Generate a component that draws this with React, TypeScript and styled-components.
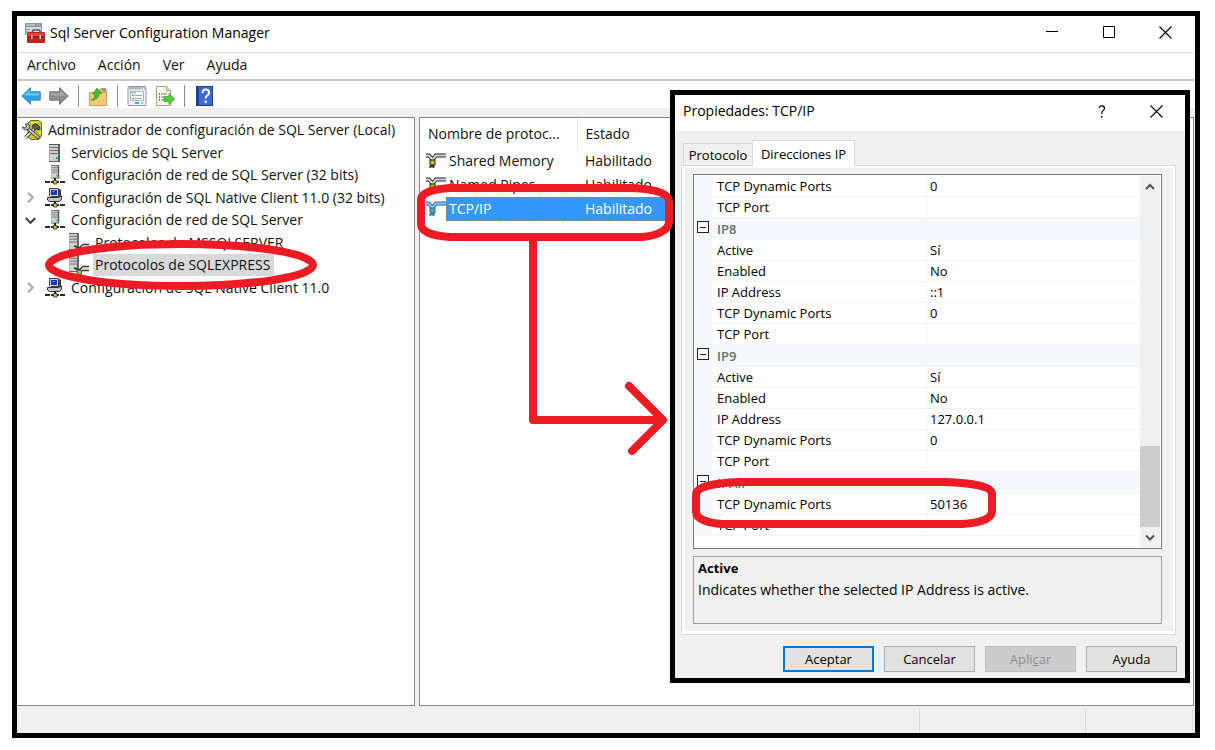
import React from "react";
import styled, { createGlobalStyle, css } from "styled-components";

const GlobalStyle = createGlobalStyle`
  *, *::before, *::after { box-sizing: border-box; }
  body {
    margin: 0;
    background: #fff;
    color: #111;
    font-family: "Open Sans", "Noto Sans", sans-serif;
    font-size: 14px;
    line-height: 20px;
  }
  button {
    font: inherit;
    color: inherit;
    padding: 0;
    border: 0;
    background: none;
  }
  svg { display: block; flex-shrink: 0; }
`;

const Page = styled.div`
  position: relative;
  min-height: 100vh;
  padding: 11px 15px 12px 12px;
  display: flex;
`;

const Window = styled.main`
  position: relative;
  flex: 1;
  min-width: 0;
  display: flex;
  flex-direction: column;
  border: 5px solid #000;
  background: #fff;
`;

const TitleBar = styled.header`
  display: flex;
  align-items: stretch;
  height: 37px;
  padding: 0 1px 0 8px;
  border-bottom: 1px solid #e3e3e3;
  color: #000;
`;

const Title = styled.h1`
  flex: 1;
  display: flex;
  align-items: center;
  gap: 5px;
  margin: 0;
  padding-bottom: 3px;
  font-size: 14px;
  font-weight: 400;
`;

const CaptionButton = styled.button<{ $width?: number }>`
  width: ${(p) => p.$width ?? 57}px;
  display: flex;
  align-items: center;
  justify-content: center;
  padding-bottom: 4px;
`;

const MenuBar = styled.nav`
  display: flex;
  align-items: center;
  gap: 22px;
  height: 28px;
  padding: 0 10px 2px;
  border-bottom: 2px solid #cacace;
`;

const ToolBar = styled.div`
  display: flex;
  align-items: center;
  gap: 8px;
  height: 27px;
  padding: 2px 4px 0;
`;

const ToolButton = styled.button`
  width: 20px;
  height: 20px;
`;

const Separator = styled.span`
  width: 1px;
  height: 22px;
  margin: 0 1px;
  background: #8c8c8c;
`;

const Workspace = styled.div`
  flex: 1;
  display: flex;
  gap: 4px;
  padding: 9px 1px 0 0;
  background: #f0f0f0;
`;

const Pane = styled.section<{ $side: "tree" | "list" }>`
  border: 1px solid #828790;
  background: #fff;
  min-width: 0;
  ${(p) =>
    p.$side === "tree"
      ? css`
          flex: 0 0 398px;
          border-left: 0;
          padding-top: 1px;
        `
      : css`
          flex: 1;
        `}
`;

const Tree = styled.ul`
  display: grid;
  grid-auto-rows: 1fr;
  height: 180px;
  margin: 0;
  padding: 0;
  list-style: none;
`;

const TreeRow = styled.li<{ $depth: number }>`
  display: flex;
  align-items: center;
  padding-left: ${(p) => 5 + 24 * Math.max(0, p.$depth - 1)}px;
  white-space: nowrap;
`;

const Expander = styled.span`
  width: 23px;
  padding-left: 3px;
`;

const TreeLabel = styled.span<{ $selected?: boolean }>`
  margin-left: 4px;
  padding: 0 4px 0 2px;
  line-height: 22px;
  background: ${(p) => (p.$selected ? "#d9d9d9" : "transparent")};
`;

const List = styled.table`
  width: 256px;
  table-layout: fixed;
  border-collapse: collapse;
  text-align: left;

  th, td { padding: 0; font-weight: 400; }
  th { height: 31px; padding-left: 8px; }
  th:first-child { width: 157px; border-right: 1px solid #e5e5e5; }
  td { height: 24px; }
`;

const ProtocolCell = styled.div`
  display: flex;
  align-items: center;
  padding-left: 6px;
`;

const ListText = styled.span<{ $selected?: boolean; $first?: boolean }>`
  display: block;
  flex: 1;
  height: 24px;
  line-height: 22px;
  padding-left: ${(p) => (p.$first ? 2 : 7)}px;
  border: 1px solid transparent;
  ${(p) =>
    p.$selected &&
    css`
      color: #fff;
      background: #3399ff;
      border: 1px dashed #b07a45;
      border-${p.$first ? "right" : "left"}-color: #3399ff;
    `}
`;

const StatusBar = styled.footer`
  display: flex;
  height: 27px;
  padding: 3px 2px 0 0;
  background: #f0f0f0;
`;

const StatusCell = styled.span<{ $width?: number }>`
  flex: ${(p) => (p.$width ? `0 0 ${p.$width}px` : "1")};
  border-right: 1px solid #d9d9d9;
`;

const Dialog = styled.section`
  position: absolute;
  left: 653px;
  top: 74px;
  width: 520px;
  border: 5px solid #000;
  background: #f0f0f0;
  color: #000;
  font-size: 13px;
`;

const DialogTitleBar = styled.header`
  display: flex;
  height: 36px;
  padding: 0 1px 0 8px;
  background: #fff;
`;

const DialogTitle = styled.h2`
  flex: 1;
  margin: 0;
  padding-top: 6px;
  font-size: 14px;
  font-weight: 400;
`;

const Tabs = styled.div`
  display: flex;
  align-items: flex-end;
  height: 35px;
  padding: 0 8px;
  margin-bottom: -1px;
`;

const Tab = styled.button<{ $active?: boolean }>`
  position: relative;
  width: ${(p) => (p.$active ? 103 : 70)}px;
  height: ${(p) => (p.$active ? 26 : 23)}px;
  margin-left: ${(p) => (p.$active ? -1 : 0)}px;
  border: 1px solid #d9d9d9;
  border-bottom: ${(p) => (p.$active ? 0 : "1px solid #d9d9d9")};
  background: ${(p) => (p.$active ? "#fff" : "#f0f0f0")};
`;

const TabPanel = styled.div`
  margin: 0 9px 0 6px;
  padding: 2px 2px 3px 3px;
  border: 1px solid #dcdcdc;
  background: #fff;
`;

const PanelBody = styled.div`
  display: flex;
  flex-direction: column;
  gap: 7px;
  padding: 6px 11px 7px 8px;
  background: #f0f0f0;
`;

const GridBox = styled.div`
  display: flex;
  height: 375px;
  padding: 1px 0 0 1px;
  border: 1px solid #777;
  background: #fff;
`;

const PropertyTable = styled.table`
  flex: 1;
  align-self: flex-start;
  table-layout: fixed;
  border-collapse: separate;
  border-spacing: 0;
  text-align: left;

  th, td { padding: 0; height: 21px; line-height: 20px; font-weight: 400; border-bottom: 1px solid #f2f5fa; }
  th:first-child, td:first-child { background: #f4f7fc; }
  tbody th { padding-left: 5px; }
`;

const PropertyValue = styled.td`
  && {
    padding-left: 3px;
    border-left: 1px solid #f2f5fa;
  }
`;

const CategoryRow = styled.tr`
  background: #f4f7fc;
  color: #6d6d6d;

  && td, && th { height: 22px; vertical-align: top; }
  && th { font-weight: 600; padding-top: 1px; }
`;

const Collapse = styled.button`
  display: block;
  width: 12px;
  height: 12px;
  margin: 3px 0 0 2px;
  border: 1px solid #222;
  background: linear-gradient(#222, #222) center / 6px 1px no-repeat #fff;
`;

const ScrollBar = styled.div`
  display: flex;
  flex-direction: column;
  align-items: center;
  width: 20px;
  margin-right: 1px;
  background: #f0f0f0;
`;

const ScrollArrow = styled.button`
  display: flex;
  align-items: center;
  justify-content: center;
  width: 20px;
  height: 21px;
`;

const ScrollTrack = styled.div`
  flex: 1;
  width: 100%;
  display: flex;
  flex-direction: column;
  justify-content: flex-end;
`;

const ScrollThumb = styled.div`
  height: 81px;
  background: #cdcdcd;
`;

const Description = styled.div`
  height: 68px;
  padding: 0 4px;
  border: 1px solid #a0a0a0;
  font-size: 14px;

  p { margin: 0; line-height: 21px; }
  strong { font-size: 13px; }
`;

const DialogActions = styled.div`
  display: flex;
  justify-content: flex-end;
  gap: 10px;
  padding: 11px 8px 6px;
`;

const ActionButton = styled.button<{ $primary?: boolean }>`
  width: 91px;
  height: 26px;
  border: ${(p) => (p.$primary ? "2px solid #0078d7" : "1px solid #adadad")};
  background: #e1e1e1;

  &:disabled {
    color: #8e8e8e;
    background: #cccccc;
    border-color: #bfbfbf;
  }
`;

const Annotations = styled.svg`
  position: absolute;
  left: 0;
  top: 0;
  pointer-events: none;
`;

const CloseGlyph = () => (
  <svg width="13" height="13" viewBox="0 0 13 13" stroke="#000" strokeWidth="1.1">
    <path d="M.5.5l12 12M12.5.5l-12 12" />
  </svg>
);

const ToolboxIcon = () => (
  <svg width="20" height="20" viewBox="0 0 20 20">
    <path d="M0 0h17v12H0z" fill="#8793a0" />
    <path d="M1 4h15v8H1z" fill="#d3dae0" />
    <path d="M1 2h9M12 2h1M14 2h1" stroke="#dde3e9" />
    <path d="M1 6.500h4M1 9h3" stroke="#8095aa" />
    <path d="M7.500 10V8.500q0-1.500 1.500-1.500h4.500q1.500 0 1.500 1.500V10" fill="none" stroke="#555" strokeWidth="1.600" />
    <rect x="2" y="9" width="18" height="11" rx="1" fill="#bd2620" />
    <path d="M3 10h16v3H3z" fill="#dc463d" />
    <path d="M2 14h18" stroke="#8d1a16" />
    <path d="M6 12h1.500v4H6zM14.500 12H16v4h-1.500z" fill="#e2c8c6" />
  </svg>
);

const ArrowIcon = ({ forward }: { forward?: boolean }) => (
  <svg width="20" height="20" viewBox="0 0 20 20">
    <g transform={forward ? "translate(20 0) scale(-1 1)" : undefined}>
      <path
        d="M.7 10L9.500 1.500v4.300h9.800v8.400H9.500v4.300z"
        fill={forward ? "#8d8d8d" : "#2b9fe6"}
        stroke={forward ? "#777" : "#4b93c2"}
      />
      <path d="M3 9.500L8.500 4.300V7.300h9.600v2.200z" fill={forward ? "#a8a8a8" : "#6fcbf7"} />
    </g>
  </svg>
);

const FolderUpIcon = () => (
  <svg width="20" height="20" viewBox="0 0 20 20">
    <path d="M11 4l1-2h6l1 2v4h-8z" fill="#e0b44f" />
    <path d="M14 2.500h4v2h-4z" fill="#5b93d2" />
    <path d="M1.500 6.500h17v13h-17z" fill="#f0cb74" stroke="#d3a347" />
    <path d="M3 14c3-1 4-3 4-6H4.500L9 2l4.500 5.500H11c0 4-3 7-8 6.500z" fill="#46bd35" stroke="#329526" strokeWidth=".7" />
  </svg>
);

const PropertiesIcon = () => (
  <svg width="20" height="20" viewBox="0 0 20 20">
    <rect x="1" y=".5" width="18" height="19" rx="1" fill="#f3f4f6" stroke="#8f959d" />
    <path d="M2 1h16v2.500H2z" fill="#b2b8c0" />
    <path d="M14 2.200h1M16 2.200h1" stroke="#fff" />
    <rect x="3.500" y="5.500" width="13" height="9" fill="#fff" stroke="#a6b2c2" />
    <path d="M4 6h5v2H4z" fill="#c0cfe0" />
    <path d="M5 9.500h2M5 12.500h2" stroke="#2c91cf" />
    <path d="M8 9.500h7M8 12.500h7" stroke="#9aa6b5" />
    <path d="M8 17h4" stroke="#2fb7e8" strokeWidth="2" />
    <path d="M13.500 17h3" stroke="#b5bcc5" strokeWidth="2" />
  </svg>
);

const ExportIcon = () => (
  <svg width="20" height="20" viewBox="0 0 20 20">
    <path d="M1.500 .5h10l4 4v15h-14z" fill="#fbf8e4" stroke="#a5a18c" />
    <path d="M11.500 .5v4h4" fill="#e6e1c4" stroke="#a5a18c" />
    <path d="M4 8h1M4 11h1M4 14h1" stroke="#444" strokeWidth="1.500" />
    <path d="M6 8h6M6 11h4M6 14h4" stroke="#77809a" strokeWidth="1.200" />
    <path d="M9 10.500h5V7.500l5.700 5.500-5.700 5.500v-3H9z" fill="#55c73d" stroke="#399a29" strokeWidth=".7" />
  </svg>
);

const HelpIcon = () => (
  <svg width="20" height="20" viewBox="0 0 20 20">
    <rect x="2" y="0" width="17" height="20" fill="#1f3f9f" />
    <path d="M5 1h13v18H5z" fill="#3f68d0" />
    <path d="M8.500 7q0-3.500 3.200-3.500T15 6.500q0 2-1.800 3T11.700 12.500" fill="none" stroke="#fff" strokeWidth="2" />
    <circle cx="11.700" cy="15.700" r="1.300" fill="#fff" />
  </svg>
);

const ManagerIcon = () => (
  <svg width="20" height="20" viewBox="0 0 20 20">
    <path d="M6 3l3-2.500h8L19.500 3v13L17 19.500H9L6 17z" fill="#cdc61e" stroke="#6f6b12" />
    <path d="M9 2.500h7M18 5v9" stroke="#f4f06a" strokeWidth="1.500" />
    <path d="M3.500 17.500L13 8" stroke="#2c2c2c" strokeWidth="3.600" />
    <path d="M3.500 17.500L13 8" stroke="#e4e4e4" strokeWidth="1.800" />
    <path d="M10 6q2-3 5-2l3 3v3l-3-1-2 1z" fill="#5d5d5d" stroke="#222" strokeWidth=".8" />
    <path d="M5 8l12 10" stroke="#2c2c2c" strokeWidth="3.400" />
    <path d="M5 8l11.500 9.500" stroke="#d0d0d0" strokeWidth="1.700" />
    <path d="M0 7l3 1 1.500-2L3 4q4-1 5 2 0 4-4 4-3 0-4-3z" fill="#bdbdbd" stroke="#333" strokeWidth=".8" />
  </svg>
);

const ServerShape = () => (
  <g>
    <path d="M0 0h11v18H0z" fill="#5a5a5a" />
    <path d="M1 1h8v16H1z" fill="#cfcfcf" />
    <path d="M1 1v16" stroke="#eee" />
    <path d="M1 3.500h8M1 6.500h8M1 9.500h8" stroke="#6a6a6a" />
    <path d="M7 13h2v2H7z" fill="#16c23b" />
  </g>
);

const NetBase = () => (
  <g>
    <path d="M0 17h20" stroke="#2a2a2a" strokeWidth="1.800" strokeDasharray="5 1 8 1 5" />
    <path d="M10 13v3" stroke="#222" strokeWidth="2" />
    <path d="M8.500 15.500h3.500v3.500H8.500z" fill="#cfc620" stroke="#333" strokeWidth=".8" />
  </g>
);

const ServerIcon = () => (
  <svg width="20" height="20" viewBox="0 0 20 20">
    <g transform="translate(4 1)">
      <ServerShape />
    </g>
  </svg>
);

const NetServerIcon = () => (
  <svg width="20" height="20" viewBox="0 0 20 20">
    <g transform="translate(6 0) scale(.75 .75)">
      <ServerShape />
    </g>
    <NetBase />
  </svg>
);

const ClientIcon = () => (
  <svg width="20" height="20" viewBox="0 0 20 20">
    <path d="M4 0h9l3 2v7H7L4 8z" fill="#3c3c3c" />
    <path d="M5 1h8v7H5z" fill="#d6d6d6" />
    <path d="M6 2h6v5H6z" fill="#1634d0" />
    <path d="M7.500 3h2v1h-2z" fill="#7fa0ff" />
    <path d="M2.500 9.500h11l3-1.500v3l-2 2.500H4.500l-2-1.500z" fill="#c4c4c4" stroke="#2f2f2f" />
    <NetBase />
  </svg>
);

const ProtocolGroupIcon = () => (
  <svg width="20" height="20" viewBox="0 0 20 20">
    <g transform="translate(0 0) scale(.9 .95)">
      <ServerShape />
    </g>
    <path d="M5 13l5 2 4-3.500h6M13 15.500h7" fill="none" stroke="#333" strokeWidth="1.400" />
    <path d="M13 13.500h7" stroke="#d0d0d0" strokeWidth="1.400" />
    <path d="M8 15h4.500v4.500H8z" fill="#b9b13a" stroke="#333" strokeWidth=".8" />
  </svg>
);

const ProtocolIcon = ({ selected }: { selected?: boolean }) => {
  const line = selected ? "#2a6ba8" : "#222";
  return (
    <svg width="20" height="20" viewBox="0 0 20 20">
      <path d="M0 4.500h3l3.500 4 3.500-4h10" fill="none" stroke={line} strokeWidth="4" />
      <path d="M0 4.500h3l3.500 4 3.500-4h10" fill="none" stroke={selected ? "#8fc4f5" : "#d6d6d6"} strokeWidth="2" />
      <path d="M3.500 16.500l3-2M7.500 14v3" stroke={line} strokeWidth="1.800" />
      <rect x="4" y="9" width="5" height="5" fill={selected ? "#59a7a0" : "#c4ba20"} stroke={line} />
    </svg>
  );
};

const Chevron = ({ open }: { open?: boolean }) => (
  <svg width="11" height="11" viewBox="0 0 11 11" fill="none" stroke={open ? "#404040" : "#a6a6a6"} strokeWidth="2">
    <path d={open ? "M.7 3l4.800 4.800L10.300 3" : "M3 .7l4.800 4.800L3 10.300"} />
  </svg>
);

const ScrollGlyph = ({ down }: { down?: boolean }) => (
  <svg width="10" height="8" viewBox="0 0 10 8" fill="none" stroke="#505050" strokeWidth="2">
    <path d={down ? "M1 1.500l4 4 4-4" : "M1 6l4-4 4 4"} />
  </svg>
);

type Node = { label: string; depth: number; icon: React.ReactNode; open?: boolean; selected?: boolean };

const nodes: Node[] = [
  { label: "Administrador de configuración de SQL Server (Local)", depth: 0, icon: <ManagerIcon /> },
  { label: "Servicios de SQL Server", depth: 1, icon: <ServerIcon /> },
  { label: "Configuración de red de SQL Server (32 bits)", depth: 1, icon: <NetServerIcon /> },
  { label: "Configuración de SQL Native Client 11.0 (32 bits)", depth: 1, icon: <ClientIcon />, open: false },
  { label: "Configuración de red de SQL Server", depth: 1, icon: <NetServerIcon />, open: true },
  { label: "Protocolos de MSSQLSERVER", depth: 2, icon: <ProtocolGroupIcon /> },
  { label: "Protocolos de SQLEXPRESS", depth: 2, icon: <ProtocolGroupIcon />, selected: true },
  { label: "Configuración de SQL Native Client 11.0", depth: 1, icon: <ClientIcon />, open: false },
];

const protocols = [
  { name: "Shared Memory", state: "Habilitado" },
  { name: "Named Pipes", state: "Habilitado" },
  { name: "TCP/IP", state: "Habilitado", selected: true },
];

type Property = { name: string; value?: string; category?: boolean };

const properties: Property[] = [
  { name: "TCP Dynamic Ports", value: "0" },
  { name: "TCP Port" },
  { name: "IP8", category: true },
  { name: "Active", value: "Sí" },
  { name: "Enabled", value: "No" },
  { name: "IP Address", value: "::1" },
  { name: "TCP Dynamic Ports", value: "0" },
  { name: "TCP Port" },
  { name: "IP9", category: true },
  { name: "Active", value: "Sí" },
  { name: "Enabled", value: "No" },
  { name: "IP Address", value: "127.0.0.1" },
  { name: "TCP Dynamic Ports", value: "0" },
  { name: "TCP Port" },
  { name: "IPAll", category: true },
  { name: "TCP Dynamic Ports", value: "50136" },
  { name: "TCP Port" },
];

const PropertiesDialog = () => (
  <Dialog role="dialog" aria-labelledby="dialog-title">
    <DialogTitleBar>
      <DialogTitle id="dialog-title">Propiedades: TCP/IP</DialogTitle>
      <CaptionButton $width={55} aria-label="Ayuda">
        <svg width="8" height="13" viewBox="0 0 8 13" fill="none" stroke="#000" strokeWidth="1.200">
          <path d="M1.200 3Q1.200 .8 3.800 .8T6.500 3.200Q6.500 4.500 5.100 5.600T3.700 9" />
          <path d="M3.700 11v1.500" strokeWidth="1.500" />
        </svg>
      </CaptionButton>
      <CaptionButton $width={55} aria-label="Cerrar">
        <CloseGlyph />
      </CaptionButton>
    </DialogTitleBar>
    <Tabs role="tablist">
      <Tab role="tab" aria-selected={false}>Protocolo</Tab>
      <Tab role="tab" aria-selected $active>Direcciones IP</Tab>
    </Tabs>
    <TabPanel role="tabpanel">
      <PanelBody>
        <GridBox>
          <PropertyTable>
            <colgroup>
              <col width="17" />
              <col width="214" />
              <col />
            </colgroup>
            <tbody>
              {properties.map((p, i) =>
                p.category ? (
                  <CategoryRow key={i}>
                    <td><Collapse aria-label={`Contraer ${p.name}`} /></td>
                    <th colSpan={2}>{p.name}</th>
                  </CategoryRow>
                ) : (
                  <tr key={i}>
                    <td />
                    <th scope="row">{p.name}</th>
                    <PropertyValue>{p.value}</PropertyValue>
                  </tr>
                )
              )}
            </tbody>
          </PropertyTable>
          <ScrollBar>
            <ScrollArrow aria-label="Subir"><ScrollGlyph /></ScrollArrow>
            <ScrollTrack><ScrollThumb /></ScrollTrack>
            <ScrollArrow aria-label="Bajar"><ScrollGlyph down /></ScrollArrow>
          </ScrollBar>
        </GridBox>
        <Description>
          <p><strong>Active</strong></p>
          <p>Indicates whether the selected IP Address is active.</p>
        </Description>
      </PanelBody>
    </TabPanel>
    <DialogActions>
      <ActionButton $primary>Aceptar</ActionButton>
      <ActionButton>Cancelar</ActionButton>
      <ActionButton disabled>Apli<u>c</u>ar</ActionButton>
      <ActionButton>Ayuda</ActionButton>
    </DialogActions>
  </Dialog>
);

export default function App() {
  return (
    <>
      <GlobalStyle />
      <Page>
        <Window>
          <TitleBar>
            <Title><ToolboxIcon />Sql Server Configuration Manager</Title>
            <CaptionButton aria-label="Minimizar">
              <svg width="12" height="12" viewBox="0 0 12 12"><path d="M0 5.500h12" stroke="#000" /></svg>
            </CaptionButton>
            <CaptionButton aria-label="Maximizar">
              <svg width="12" height="12" viewBox="0 0 12 12"><path d="M.5.5h11v11H.5z" fill="none" stroke="#000" /></svg>
            </CaptionButton>
            <CaptionButton aria-label="Cerrar"><CloseGlyph /></CaptionButton>
          </TitleBar>
          <MenuBar>
            <button>Archivo</button>
            <button>Acción</button>
            <button>Ver</button>
            <button>Ayuda</button>
          </MenuBar>
          <ToolBar>
            <ToolButton aria-label="Atrás"><ArrowIcon /></ToolButton>
            <ToolButton aria-label="Adelante"><ArrowIcon forward /></ToolButton>
            <Separator />
            <ToolButton aria-label="Subir un nivel"><FolderUpIcon /></ToolButton>
            <Separator />
            <ToolButton aria-label="Propiedades"><PropertiesIcon /></ToolButton>
            <ToolButton aria-label="Exportar lista"><ExportIcon /></ToolButton>
            <Separator />
            <ToolButton aria-label="Ayuda"><HelpIcon /></ToolButton>
          </ToolBar>
          <Workspace>
            <Pane $side="tree">
              <Tree>
                {nodes.map((n) => (
                  <TreeRow key={n.label} $depth={n.depth}>
                    {n.depth > 0 && <Expander>{n.open !== undefined && <Chevron open={n.open} />}</Expander>}
                    {n.icon}
                    <TreeLabel $selected={n.selected}>{n.label}</TreeLabel>
                  </TreeRow>
                ))}
              </Tree>
            </Pane>
            <Pane $side="list">
              <List>
                <thead>
                  <tr>
                    <th scope="col">Nombre de protoc...</th>
                    <th scope="col">Estado</th>
                  </tr>
                </thead>
                <tbody>
                  {protocols.map((p) => (
                    <tr key={p.name}>
                      <td>
                        <ProtocolCell>
                          <ProtocolIcon selected={p.selected} />
                          <ListText $first $selected={p.selected}>{p.name}</ListText>
                        </ProtocolCell>
                      </td>
                      <td><ListText $selected={p.selected}>{p.state}</ListText></td>
                    </tr>
                  ))}
                </tbody>
              </List>
            </Pane>
          </Workspace>
          <StatusBar>
            <StatusCell />
            <StatusCell $width={166} />
            <StatusCell $width={107} />
          </StatusBar>
          <PropertiesDialog />
        </Window>
        <Annotations width="1215" height="750" viewBox="0 0 1215 750" fill="none" stroke="#ed1c24" strokeWidth="8" aria-hidden="true">
          <ellipse cx="181" cy="265" rx="132" ry="21" />
          <path d="M450 188H632C655 189 669 193 669 201V222C669 231 655 236 642 237H450C434 236 421 232 421 224V200C421 193 432 189 450 188z" />
          <path d="M533 238V420H660" strokeLinejoin="round" />
          <path d="M629 386L663 420L632 451" strokeLinecap="round" strokeLinejoin="round" />
          <path d="M740 482H945C972 483 992 486 992 494V511C992 519 980 523 962 524H722C708 523 696 519 696 512V495C696 487 712 483 740 482z" />
        </Annotations>
      </Page>
    </>
  );
}
